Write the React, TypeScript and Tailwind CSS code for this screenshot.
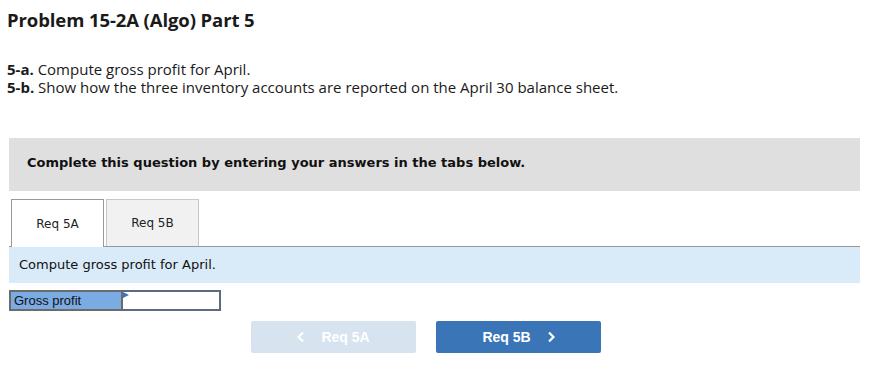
import React from "react";

export default function App() {
  return (
    <div className="w-[889px] h-[384px] bg-white relative overflow-hidden" style={{ fontFamily: "'Open Sans', Lato, sans-serif" }}>
      <div className="pl-[7px] pt-[8px] h-[138px]">
        <h1 className="text-[18.5px] font-bold text-[#1a1a1a] leading-[24px] tracking-[-0.1px]">Problem 15-2A (Algo) Part 5</h1>
        <div className="mt-[28px] text-[15px] leading-[18px] text-[#1a1a1a]">
          <div><b>5-a.</b> Compute gross profit for April.</div>
          <div><b>5-b.</b> Show how the three inventory accounts are reported on the April 30 balance sheet.</div>
        </div>
      </div>
      <div className="ml-[9px] w-[851px]" style={{ fontFamily: "'DejaVu Sans', Verdana, sans-serif" }}>
        <div className="h-[53px] bg-[#dfdfdf] flex items-center pl-[18px] pb-[3px] text-[13px] font-bold text-[#111]">
          Complete this question by entering your answers in the tabs below.
        </div>
        <div className="mt-[8px] flex items-end border-b border-[#999] h-[48px]">
          <div className="ml-[2px] w-[93px] h-[48px] bg-white border border-b-0 border-[#999] -mb-px flex items-center justify-center text-[12px] text-[#222]">Req 5A</div>
          <div className="ml-[2px] w-[93px] h-[47px] bg-[#f1f1f1] border border-b-0 border-[#c8c8c8] flex items-center justify-center text-[12px] text-[#222]">Req 5B</div>
        </div>
        <div className="h-[36px] bg-[#d9ebf9] flex items-center pl-[10px] text-[13px] text-[#111]">Compute gross profit for April.</div>
        <div className="mt-[7px] flex h-[21px]">
          <div className="w-[114px] h-[21px] bg-[#7aabe3] border-2 border-[#6b6b6b] flex items-center pl-[3px] text-[13px] text-[#111]" style={{ fontFamily: "'Liberation Sans', Arial, sans-serif" }}>Gross profit</div>
          <div className="relative w-[98px] h-[21px] bg-white border-2 border-l-0 border-[#5b6b80]">
            <div className="absolute left-0 top-0 w-0 h-0 border-t-[3px] border-b-[3px] border-l-[6px] border-t-transparent border-b-transparent border-l-[#3a75c4]"></div>
          </div>
        </div>
      </div>
      <div className="flex ml-[251px] mt-[10px] gap-[20px]" style={{ fontFamily: "'Liberation Sans', Arial, sans-serif" }}>
        <div className="w-[165px] h-[32px] rounded-[2px] bg-[#d8e3f0] flex items-center justify-center text-white font-bold text-[14px]">
          <span className="mr-[16px] flex">
            <svg width="8" height="12" viewBox="0 0 8 12"><path d="M6 1.5 L1.5 6 L6 10.5" stroke="white" strokeWidth="2.2" fill="none" /></svg>
          </span>
          Req 5A
        </div>
        <div className="w-[165px] h-[32px] rounded-[2px] bg-[#3a75b8] flex items-center justify-center text-white font-bold text-[14px]">
          Req 5B
          <span className="ml-[16px] flex">
            <svg width="8" height="12" viewBox="0 0 8 12"><path d="M2 1.5 L6.5 6 L2 10.5" stroke="white" strokeWidth="2.2" fill="none" /></svg>
          </span>
        </div>
      </div>
    </div>
  );
}
